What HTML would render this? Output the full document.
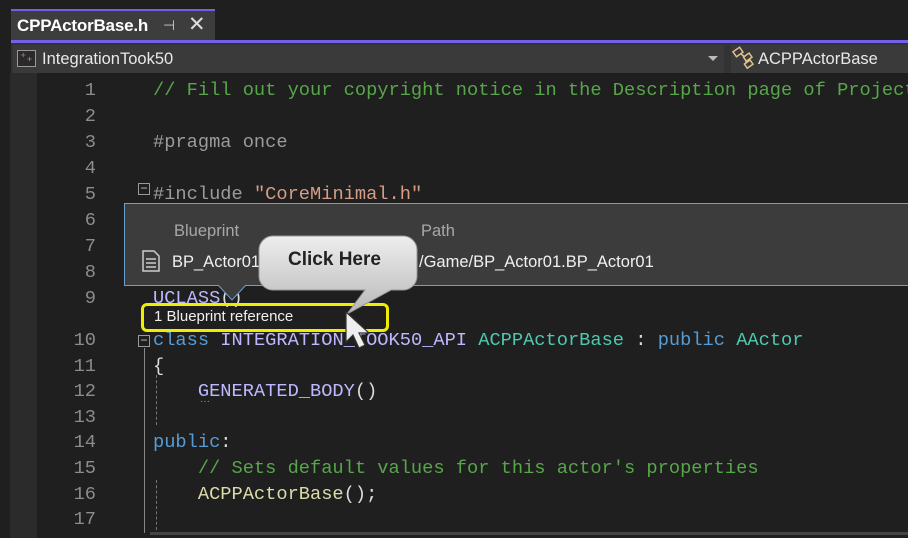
<!DOCTYPE html>
<html><head><meta charset="utf-8"><style>
*{margin:0;padding:0;box-sizing:border-box}
body{width:908px;height:538px;background:#1f1f1f;overflow:hidden;position:relative;font-family:"Liberation Sans",sans-serif}
.abs{position:absolute}
.code{position:absolute;left:153px;font-family:"Liberation Mono",monospace;font-size:18.7px;white-space:pre;line-height:26px;color:#dcdcdc}
.ln{position:absolute;left:40px;width:56px;text-align:right;font-family:"Liberation Mono",monospace;font-size:18.7px;color:#8c8c8c;line-height:26px}
.c{color:#57a64a}.k{color:#569cd6}.m{color:#bdb8ff}.t{color:#4ec9b0}.s{color:#d69d85}.f{color:#dcdcaa}.p{color:#9b9b9b}
</style></head><body>
<div class="abs" style="left:10px;top:73px;width:27px;height:465px;background:#2b2b2b"></div>
<!-- tab -->
<div class="abs" style="left:11px;top:9px;width:204px;height:32px;background:#3d3d3d;border-top:2px solid #7160e8"></div>
<div class="abs" style="left:17px;top:16px;font-size:17px;color:#fff;font-weight:bold;letter-spacing:-0.2px">CPPActorBase.h</div>
<div class="abs" style="left:163px;top:17px;font-size:14px;color:#ccc">⊣</div>
<div class="abs" style="left:188px;top:12px;font-size:21px;color:#ddd">✕</div>
<div class="abs" style="left:11px;top:40px;width:897px;height:3px;background:#7160e8"></div>
<!-- nav bar -->
<div class="abs" style="left:11px;top:43px;width:897px;height:30px;background:#333"></div>
<div class="abs" style="left:13px;top:45px;width:711px;height:28px;background:#3a3a3a"></div>
<div class="abs" style="left:731px;top:45px;width:177px;height:28px;background:#3a3a3a"></div>
<div class="abs" style="left:17px;top:50px;width:19px;height:17px;border:1px solid #999;background:#2a2a2a;color:#c586c0;font-size:12px;line-height:13px;padding-left:2px">⁺₊</div>
<div class="abs" style="left:42px;top:50px;font-size:16.5px;color:#e8e8e8">IntegrationTook50</div>
<div class="abs" style="left:708px;top:56px;width:0;height:0;border-left:5px solid transparent;border-right:5px solid transparent;border-top:5px solid #bbb"></div>
<svg class="abs" style="left:731px;top:46px" width="26" height="24"><g fill="none" stroke="#e2c08d" stroke-width="1.5"><rect x="3" y="3" width="8" height="6" transform="rotate(-35 7 6)"/><rect x="13" y="9" width="7" height="5" transform="rotate(-35 16 11)"/><rect x="14" y="16" width="7" height="5" transform="rotate(-35 17 18)"/><path d="M10 8l4 3M15 14l0 3"/></g></svg>
<div class="abs" style="left:758px;top:50px;font-size:16.5px;color:#e8e8e8">ACPPActorBase</div>
<!-- line numbers -->
<div class="ln" style="top:77px">1<br>2<br>3<br>4<br>5<br>6<br>7<br>8<br>9</div>
<div class="ln" style="top:328px;line-height:25.6px">10<br>11<br>12<br>13<br>14<br>15<br>16<br>17</div>
<!-- fold markers -->
<div class="abs" style="left:138px;top:183px;width:12px;height:12px;border:1px solid #999;color:#ccc;font-size:12px;line-height:9px;text-align:center">−</div>
<div class="abs" style="left:138px;top:335px;width:12px;height:12px;border:1px solid #999;color:#ccc;font-size:12px;line-height:9px;text-align:center">−</div>
<div class="abs" style="left:144px;top:348px;width:1px;height:185px;background:#888"></div>
<div class="abs" style="left:156px;top:375px;width:0;height:50px;border-left:1px dashed #777"></div>
<div class="abs" style="left:156px;top:480px;width:0;height:50px;border-left:1px dashed #777"></div>
<div class="abs" style="left:150px;top:532px;width:758px;height:3px;background:#444"></div>
<!-- code -->
<div class="code" style="top:77px"><span class="c">// Fill out your copyright notice in the Description page of Project</span>

<span class="p">#pragma once</span>

<span class="p">#include </span><span class="s">"CoreMinimal.h"</span>



<span class="m">UCLASS</span>()</div>
<div class="code" style="top:328px;line-height:25.6px"><span class="k">class</span> <span class="m">INTEGRATION_TOOK50_API</span> <span class="t">ACPPActorBase</span> : <span class="k">public</span> <span class="t">AActor</span>
{
    <span class="m">GENERATED_BODY</span>()

<span class="k">public</span>:
    <span class="c">// Sets default values for this actor's properties</span>
    <span class="f">ACPPActorBase</span>();
</div>
<div class="abs" style="left:200px;top:396px;color:#999;font-size:10px">···</div>
<!-- popup -->
<div class="abs" style="left:124px;top:203px;width:790px;height:83px;background:#3c3c3c;border:1px solid #6aa0cf"></div>
<svg class="abs" style="left:218px;top:284px" width="28" height="18"><path d="M0 1 L14 16 L28 1" fill="#3c3c3c" stroke="#6aa0cf" stroke-width="1"/><rect x="1" y="0" width="26" height="1.5" fill="#3c3c3c"/></svg>
<div class="abs" style="left:174px;top:222px;font-size:16.5px;color:#a8a8a8">Blueprint</div>
<div class="abs" style="left:421px;top:222px;font-size:16.5px;color:#a8a8a8">Path</div>
<svg class="abs" style="left:141px;top:250px" width="20" height="22"><path d="M2 1h11l5 5v15H2z" fill="none" stroke="#ccc" stroke-width="1.5"/><path d="M5 9h10M5 13h10M5 17h10" stroke="#ccc" stroke-width="1.5"/></svg>
<div class="abs" style="left:172px;top:253px;font-size:16.5px;color:#f0f0f0">BP_Actor01</div>
<div class="abs" style="left:419px;top:253px;font-size:16.5px;color:#f0f0f0">/Game/BP_Actor01.BP_Actor01</div>
<!-- codelens -->
<div class="abs" style="left:141px;top:303px;width:248px;height:29px;border:3px solid #f0ee00;border-radius:6px"></div>
<div class="abs" style="left:154px;top:308px;font-size:15px;color:#f0f0f0">1 Blueprint reference</div>
<!-- callout -->
<svg class="abs" style="left:255px;top:232px" width="170" height="90"><defs><linearGradient id="g" x1="0" y1="0" x2="0" y2="1"><stop offset="0" stop-color="#eee"/><stop offset="1" stop-color="#b8b8b8"/></linearGradient></defs><path d="M18 4h130a14 14 0 0 1 14 14v26a14 14 0 0 1-14 14h-12l-44 24l18-24H18a14 14 0 0 1-14-14V18a14 14 0 0 1 14-14z" fill="url(#g)" stroke="#999" stroke-width="1"/></svg>
<div class="abs" style="left:288px;top:249px;font-size:19px;font-weight:bold;color:#222">Click Here</div>
<!-- cursor -->
<svg class="abs" style="left:344px;top:310px" width="30" height="42"><path d="M2 2v30l7-7 6 13 6-3-6-12h10z" fill="#eee" stroke="#333" stroke-width="1.2"/></svg>
</body></html>
